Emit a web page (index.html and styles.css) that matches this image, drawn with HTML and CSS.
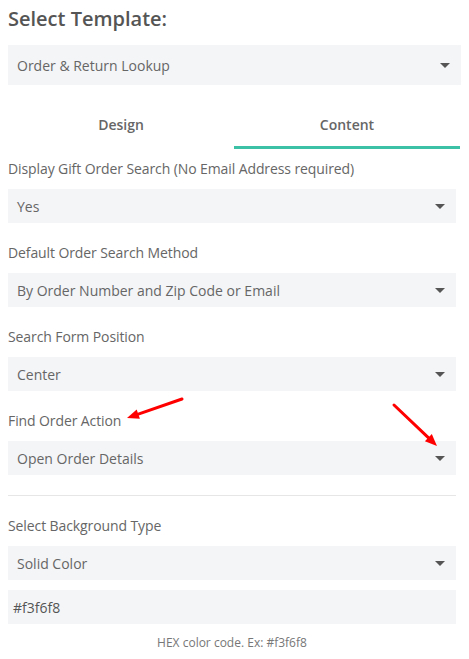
FILE: index.html
```html
<!DOCTYPE html>
<html lang="en">
<head>
<meta charset="utf-8">
<title>Select Template</title>
<link rel="stylesheet" href="styles.css">
</head>
<body>
<div class="page">
  <h1 class="title">Select Template:</h1>
  <div class="select select-main">
    <span>Order &amp; Return Lookup</span>
    <svg class="caret" width="10" height="5" viewBox="0 0 10 5"><path d="M0 0H10L5 5Z"/></svg>
  </div>

  <div class="tabs">
    <div class="tab">Design</div>
    <div class="tab active">Content</div>
  </div>

  <div class="fields">
    <div class="field">
      <label class="label">Display Gift Order Search (No Email Address required)</label>
      <div class="select">
        <span>Yes</span>
        <svg class="caret" width="10" height="5" viewBox="0 0 10 5"><path d="M0 0H10L5 5Z"/></svg>
      </div>
    </div>
    <div class="field">
      <label class="label">Default Order Search Method</label>
      <div class="select">
        <span>By Order Number and Zip Code or Email</span>
        <svg class="caret" width="10" height="5" viewBox="0 0 10 5"><path d="M0 0H10L5 5Z"/></svg>
      </div>
    </div>
    <div class="field">
      <label class="label">Search Form Position</label>
      <div class="select">
        <span>Center</span>
        <svg class="caret" width="10" height="5" viewBox="0 0 10 5"><path d="M0 0H10L5 5Z"/></svg>
      </div>
    </div>
    <div class="field">
      <label class="label">Find Order Action</label>
      <div class="select">
        <span>Open Order Details</span>
        <svg class="caret" width="10" height="5" viewBox="0 0 10 5"><path d="M0 0H10L5 5Z"/></svg>
      </div>
    </div>

    <hr class="divider">

    <div class="field field-last">
      <label class="label">Select Background Type</label>
      <div class="select">
        <span>Solid Color</span>
        <svg class="caret" width="10" height="5" viewBox="0 0 10 5"><path d="M0 0H10L5 5Z"/></svg>
      </div>
      <div class="input">#f3f6f8</div>
      <div class="help">HEX color code. Ex: #f3f6f8</div>
    </div>
  </div>
</div>

<svg class="annotations" width="469" height="659" viewBox="0 0 469 659">
  <line x1="182" y1="399" x2="138.3" y2="414.1" stroke="#f00" stroke-width="3" stroke-linecap="round"/>
  <polygon points="127,418 139.9,418.8 136.7,409.4" fill="#f00"/>
  <line x1="394" y1="405" x2="428.3" y2="437.7" stroke="#f00" stroke-width="3" stroke-linecap="round"/>
  <polygon points="437,446 424.9,441.3 431.8,434.1" fill="#f00"/>
</svg>
</body>
</html>
```

FILE: styles.css
```css
html, body {
  margin: 0;
  padding: 0;
  background: #fff;
}

body {
  font-family: "Open Sans", "Liberation Sans", Arial, sans-serif;
  color: #666;
  position: relative;
  width: 469px;
  min-height: 659px;
}

.page {
  padding: 5px 8px 0 8px;
}

.title {
  margin: 0 0 12px 0;
  font-size: 20px;
  line-height: 28px;
  font-weight: 600;
  color: #555;
}

.select {
  display: flex;
  align-items: center;
  justify-content: space-between;
  height: 34px;
  padding: 0 11px 0 9px;
  background: #f4f5f7;
  font-size: 14px;
  color: #666;
}

.select-main {
  height: 40px;
}

.caret {
  fill: #555;
  flex: none;
}

.tabs {
  display: grid;
  grid-template-columns: 1fr 1fr;
  margin-top: 16px;
  margin-right: 1px;
}

.tab {
  text-align: center;
  font-size: 14px;
  font-weight: 600;
  line-height: 20px;
  color: #666;
  padding: 14px 0 11px;
  border-bottom: 3px solid transparent;
}

.tab.active {
  border-bottom-color: #3dc1a6;
}

.fields {
  padding-right: 5px;
  padding-top: 10px;
}

.field {
  display: flex;
  flex-direction: column;
  gap: 10px;
  margin-bottom: 20px;
}

.label {
  font-size: 14px;
  line-height: 20px;
  letter-spacing: -0.1px;
  color: #666;
}

.divider {
  border: 0;
  border-top: 1px solid #e6e6e6;
  margin: 0 0 20px 0;
  height: 0;
}

.input {
  display: flex;
  align-items: center;
  height: 34px;
  padding: 0 5px;
  background: #f4f5f7;
  font-size: 14px;
  color: #555;
}

.help {
  text-align: center;
  font-size: 12px;
  line-height: 20px;
  margin-top: -1px;
  color: #777;
}

.annotations {
  position: absolute;
  left: 0;
  top: 0;
  pointer-events: none;
}
```
